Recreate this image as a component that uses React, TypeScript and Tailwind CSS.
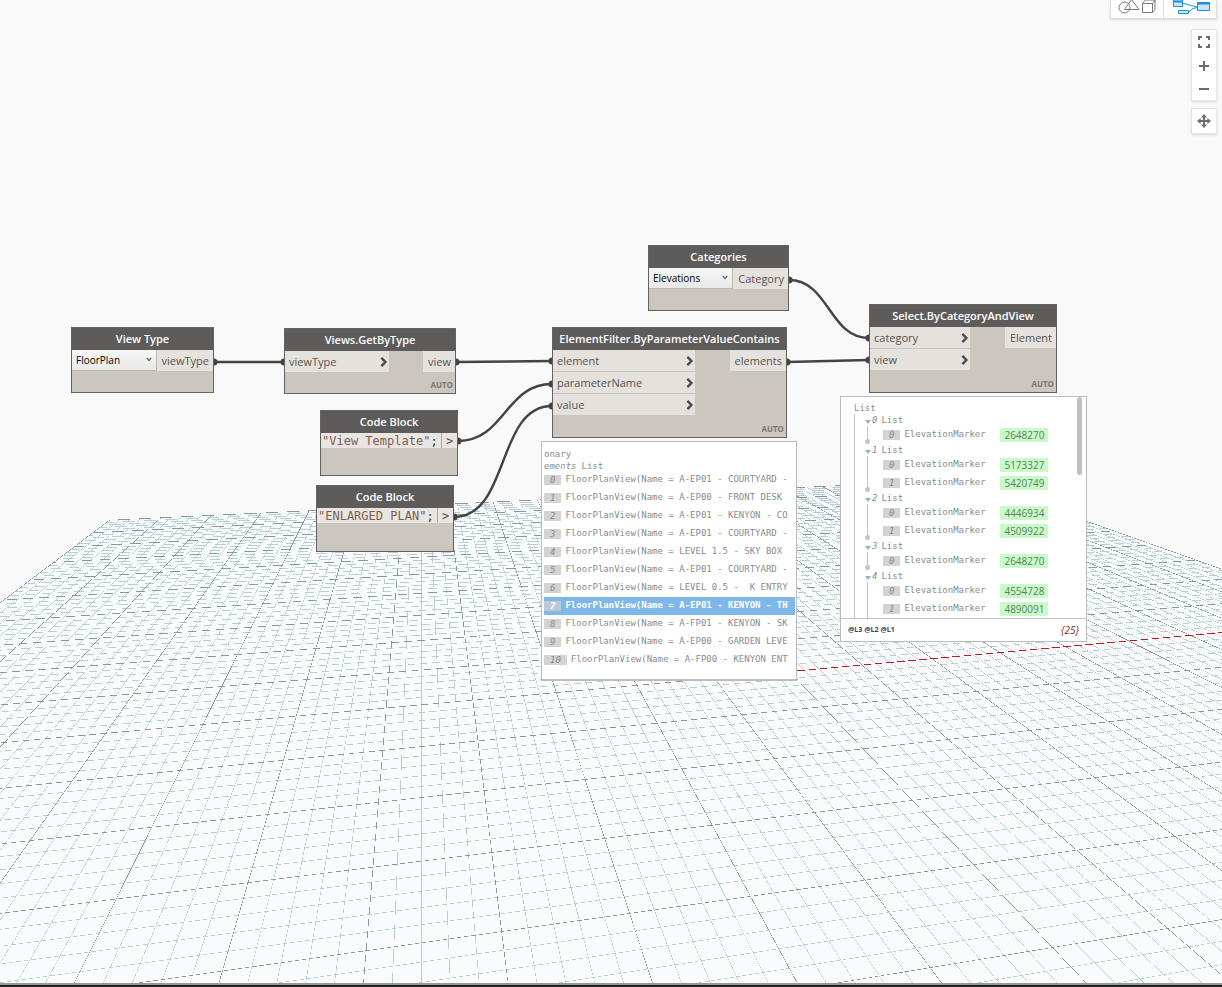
import React from "react";
import clsx from "clsx";

type Watch = { id: number; text: string; selected?: boolean };

const filterRows: Watch[] = [
  { id: 0, text: "FloorPlanView(Name = A-EP01 - COURTYARD - " },
  { id: 1, text: "FloorPlanView(Name = A-EP00 - FRONT DESK " },
  { id: 2, text: "FloorPlanView(Name = A-EP01 - KENYON - CO" },
  { id: 3, text: "FloorPlanView(Name = A-EP01 - COURTYARD - " },
  { id: 4, text: "FloorPlanView(Name = LEVEL 1.5 - SKY BOX " },
  { id: 5, text: "FloorPlanView(Name = A-EP01 - COURTYARD - " },
  { id: 6, text: "FloorPlanView(Name = LEVEL 0.5 -  K ENTRY" },
  { id: 7, text: "FloorPlanView(Name = A-EP01 - KENYON - TH", selected: true },
  { id: 8, text: "FloorPlanView(Name = A-FP01 - KENYON - SK" },
  { id: 9, text: "FloorPlanView(Name = A-EP00 - GARDEN LEVE" },
  { id: 10, text: "FloorPlanView(Name = A-FP00 - KENYON ENT" },
];

const markerLists = [
  ["2648270"],
  ["5173327", "5420749"],
  ["4446934", "4509922"],
  ["2648270"],
  ["4554728", "4890091"],
];

// Perspective of the ground plane: u counts lines left to right, v counts them
// towards the horizon. Every fifth line is a major one.
const HORIZON = 285;
const CENTER_X = 421.3;

function project(u: number, v: number) {
  const h = 1 / (0.00152 + 0.0000431 * v + 0.00000891 * u);
  return { x: CENTER_X + u * 0.04142 * h, y: HORIZON + h };
}

// A thin filled strip, narrower than a pixel, so that it breaks into dashes
// where it crosses the pixel rows.
function strip(u1: number, v1: number, u2: number, v2: number, width = 0.58) {
  const a = project(u1, v1);
  const b = project(u2, v2);
  const length = Math.hypot(b.x - a.x, b.y - a.y);
  const nx = ((b.y - a.y) / length) * (width / 2);
  const ny = ((a.x - b.x) / length) * (width / 2);
  const points = [
    [a.x + nx, a.y + ny],
    [b.x + nx, b.y + ny],
    [b.x - nx, b.y - ny],
    [a.x - nx, a.y - ny],
  ];
  return `M${points.map(([x, y]) => `${x.toFixed(3)} ${y.toFixed(3)}`).join("L")}Z`;
}

function buildGrid() {
  const minor: string[] = [];
  const major: string[] = [];
  for (let u = -32; u <= 68; u++) {
    ((u + 32) % 5 === 0 ? major : minor).push(strip(u, -10, u, 70));
  }
  for (let v = -10; v <= 70; v++) {
    if (v === 20) continue;
    ((v + 10) % 5 === 0 ? major : minor).push(strip(-32, v, 68, v));
  }
  major.push(strip(-32, 20, 18, 20));
  return { minor, major, axis: strip(18, 20, 68, 20, 0.68) };
}

const grid = buildGrid();

function Ground() {
  return (
    <svg
      className="absolute inset-0 h-full w-full"
      viewBox="0 0 1222 983"
      preserveAspectRatio="xMinYMin slice"
      shapeRendering="crispEdges"
      aria-hidden="true"
    >
      <path d="M0 603L110 521L969 480L1222 570V983H0Z" fill="#f9fbfc" />
      <g fill="#b7cdd8">
        {grid.minor.map((d) => (
          <path key={d} d={d} />
        ))}
      </g>
      <g fill="#8b979f">
        {grid.major.map((d) => (
          <path key={d} d={d} />
        ))}
      </g>
      <path d={grid.axis} fill="#c01823" />
    </svg>
  );
}

const wires = [
  "M214 362H284",
  "M456 362L552 361",
  "M458 441C505 441 505 384 552 384",
  "M454 517C510 517 496 406 552 406",
  "M787 362L869 360",
  "M789 280C829 280 829 338 869 338",
];

const wireEnds = [
  [214, 362], [284, 362], [456, 362], [552, 361], [458, 441], [552, 384],
  [454, 517], [552, 406], [787, 362], [869, 360], [789, 280], [869, 338],
];

function Wires() {
  return (
    <svg className="absolute inset-0 h-full w-full" fill="none" aria-hidden="true">
      {wires.map((d) => (
        <path key={d} d={d} stroke="#434343" strokeWidth="2.4" />
      ))}
      {wireEnds.map(([x, y]) => (
        <circle key={`${x}-${y}`} cx={x} cy={y} r="3.5" fill="#434343" />
      ))}
    </svg>
  );
}

function Node({
  title,
  className,
  auto,
  children,
}: {
  title: string;
  className: string;
  auto?: boolean;
  children: React.ReactNode;
}) {
  return (
    <section
      className={clsx(
        "absolute flex flex-col border border-[#63625f] bg-[#cbc6be]",
        className
      )}
    >
      <h2 className="h-[22px] shrink-0 bg-[#5e5c5a] text-center text-[11px] leading-[22px] font-semibold whitespace-nowrap text-white">
        {title}
      </h2>
      <div className="flex items-start justify-between">{children}</div>
      {auto && (
        <span className="mt-auto pr-[2px] pb-[3px] text-right text-[8px] leading-[10px] font-bold text-[#7b7773]">
          AUTO
        </span>
      )}
    </section>
  );
}

function InPort({ name }: { name: string }) {
  return (
    <li className="flex h-[22px] items-center justify-between border-b border-[#cbc6be] bg-[#e5e2dd] pt-px pr-px pl-1">
      {name}
      <svg width="8" height="12" viewBox="0 0 8 12" fill="none" stroke="#4b4b4b" strokeWidth="2.4">
        <path d="M1.4 1.8L5.4 6L1.4 10.2" />
      </svg>
    </li>
  );
}

function InPorts({ names, className }: { names: string[]; className: string }) {
  return (
    <ul className={clsx("text-[11px] text-[#55534f]", className)}>
      {names.map((name) => (
        <InPort key={name} name={name} />
      ))}
    </ul>
  );
}

function OutPort({ name }: { name: string }) {
  return (
    <span className="flex h-[21px] items-center bg-[#e5e2dd] pt-px pr-1 pl-[5px] text-[11px] text-[#55534f]">
      {name}
    </span>
  );
}

function Dropdown({ label, value }: { label: string; value: string }) {
  return (
    <div className="relative flex flex-1 border-r border-b border-[#bdbab5]">
      <select
        aria-label={label}
        defaultValue={value}
        className="h-[20px] w-full appearance-none bg-linear-to-b from-[#f6f6f6] to-[#e9e9e9] pl-1 text-[10px] text-black"
      >
        <option>{value}</option>
      </select>
      <svg
        className="pointer-events-none absolute top-[7px] right-1"
        width="6" height="5" viewBox="0 0 6 5" fill="none" stroke="#5a5a5a" strokeWidth="1.2"
      >
        <path d="M0.8 0.8L3 3.6L5.2 0.8" />
      </svg>
    </div>
  );
}

function CodeLine({ code }: { code: string }) {
  return (
    <div className="flex h-[15px] w-full items-center bg-[#e8e5e2] font-['DejaVu_Sans_Mono',monospace] text-[12px]">
      <code className="flex-1 pl-px font-['DejaVu_Sans_Mono',monospace] whitespace-pre text-[#7d5f4c]">
        {code}
        <span className="text-[#333]">;</span>
      </code>
      <span className="flex h-full w-4 items-center justify-center border-l border-[#aaa7a2] text-[#55534f]">
        &gt;
      </span>
    </div>
  );
}

function IndexTag({ id, selected }: { id: number; selected?: boolean }) {
  return (
    <span
      className={clsx(
        "h-[10px] shrink-0 px-[6px] text-[9px] leading-[10px] italic",
        selected ? "bg-[#bcc9d6] text-white" : "bg-[#d3d3d3] text-[#8a8a8a]"
      )}
    >
      {id}
    </span>
  );
}

function FilterPreview() {
  return (
    <div className="absolute top-[441px] left-[541px] h-[240px] w-[256px] overflow-hidden border border-b-2 border-[#bcbcbc] bg-white pt-[6px] pr-px pl-[2px] font-['DejaVu_Sans_Mono',monospace] text-[9px] text-[#8b8b8b]">
      <p className="h-[12px] leading-[12px]">onary</p>
      <p className="flex h-[11px] gap-[5px] leading-[12px]">
        <span className="italic">ements</span>
        <span>List</span>
      </p>
      <ul>
        {filterRows.map((row) => (
          <li
            key={row.id}
            className={clsx(
              "flex h-[18px] items-center gap-1 overflow-hidden whitespace-pre",
              row.selected && "bg-[#7fb7e9] font-bold text-white"
            )}
          >
            <IndexTag id={row.id} selected={row.selected} />
            {row.text}
          </li>
        ))}
      </ul>
    </div>
  );
}

function SelectPreview() {
  return (
    <div className="absolute top-[396px] left-[840px] flex h-[246px] w-[247px] flex-col border border-[#bcbcbc] bg-white font-['DejaVu_Sans_Mono',monospace] text-[9px] text-[#8b8b8b]">
      <div className="flex min-h-0 flex-1 justify-between">
        <div className="overflow-hidden pt-[5px] pl-[13px]">
          <p className="h-[12px] leading-[12px]">List</p>
          <ul className="border-l border-[#c4c4c4] pl-[12px]">
            {markerLists.map((markers, i) => (
              <li key={i}>
                <p className="-ml-[2px] flex h-[12px] items-center leading-[12px]">
                  <svg className="mt-1" width="6" height="4" viewBox="0 0 6 4">
                    <path d="M0 0H6L3 4Z" fill="#8db4cf" />
                  </svg>
                  <span className="pr-1 pl-px italic">{i}</span>
                  List
                </p>
                <ul className="relative border-l border-[#c4c4c4] pl-[15px]">
                  {markers.map((id, n) => (
                    <li key={id} className="flex h-[18px] items-center">
                      <IndexTag id={n} />
                      <span className="w-[100px] pl-1">ElevationMarker</span>
                      <span className="h-[14px] bg-[#c8fbc8] px-1 font-['Open_Sans',sans-serif] text-[10px] leading-[14px] text-[#5f7d5f]">
                        {id}
                      </span>
                    </li>
                  ))}
                  {i < 4 && (
                    <span className="absolute bottom-0 -left-[3px] h-[5px] w-[5px] rounded-full bg-[#c4c4c4]" />
                  )}
                </ul>
              </li>
            ))}
          </ul>
        </div>
        <div className="mr-1 h-[78px] w-[5px] rounded-full bg-[#c1c1c1]" />
      </div>
      <div className="flex h-[23px] items-center justify-between border-t border-[#c4c4c4] px-[7px] font-['Open_Sans',sans-serif]">
        <span className="flex gap-[2px] text-[7px] font-bold text-[#444]">
          <span>@L3</span>
          <span>@L2</span>
          <span>@L1</span>
        </span>
        <span className="text-[10px] text-[#7b1f28] italic">{"{25}"}</span>
      </div>
    </div>
  );
}

function ViewControls() {
  return (
    <div className="absolute top-0 right-[5px] flex flex-col items-end">
      <div className="flex h-[19px] border border-t-0 border-[#dedede] bg-white shadow-sm">
        <button aria-label="3D preview" className="w-[53px] border-r border-[#dedede]">
          <svg width="52" height="18" viewBox="0 0 52 18" fill="none" stroke="#7a7a7a">
            <circle cx="13.5" cy="7.5" r="5.5" />
            <path d="M13.5 9.5L20.5 -0.5L28 9.5Z" />
            <path d="M31.5 3.5H41.5V12.5H31.5ZM31.5 3.5L34.5 0H44L41.5 3.5M44 0V9.5L41.5 12.5" />
          </svg>
        </button>
        <button aria-label="Graph view" className="w-[52px]">
          <svg width="52" height="18" viewBox="0 0 52 18" fill="#c9e4f8" stroke="#1f8fdc">
            <path d="M18 3L33 7M25 12L29 8.5L33 7.5" fill="none" />
            <path d="M9.5 -2V6.5H18.5V-2Z" />
            <path d="M9 1.5H19" strokeWidth="2" />
            <path d="M33.5 2.5H45.5V10.5H33.5ZM14.5 10.5H24.5V13.5H14.5Z" />
            <path d="M33 3.5H46" strokeWidth="2" />
          </svg>
        </button>
      </div>
      <div className="mt-[10px] flex w-[26px] flex-col border border-[#e4e4e4] bg-white shadow-sm">
        <button aria-label="Fit to screen" className="flex h-6 items-center justify-center">
          <svg width="12" height="12" viewBox="0 0 12 12" fill="none" stroke="#6c6c6c" strokeWidth="2">
            <path d="M1 4V1H4M8 1H11V4M11 8V11H8M4 11H1V8" />
          </svg>
        </button>
        <button aria-label="Zoom in" className="flex h-6 items-center justify-center">
          <svg width="10" height="10" viewBox="0 0 10 10" stroke="#6c6c6c" strokeWidth="2">
            <path d="M0 5H10M5 0V10" />
          </svg>
        </button>
        <button aria-label="Zoom out" className="flex h-[22px] items-center justify-center">
          <svg width="10" height="10" viewBox="0 0 10 10" stroke="#6c6c6c" strokeWidth="2">
            <path d="M0 5H10" />
          </svg>
        </button>
      </div>
      <button
        aria-label="Pan"
        className="mt-[7px] flex h-[26px] w-[26px] items-center justify-center border border-[#e4e4e4] bg-white shadow-sm"
      >
        <svg width="14" height="14" viewBox="0 0 14 14">
          <path d="M1 7H13M7 1V13" stroke="#6c6c6c" strokeWidth="2" />
          <path d="M7 0L10 3.6H4ZM7 14L4 10.4H10ZM0 7L3.6 4V10ZM14 7L10.4 10V4Z" fill="#6c6c6c" />
        </svg>
      </button>
    </div>
  );
}

export default function App() {
  return (
    <main className="flex min-h-screen flex-col bg-[#f9f9f9] font-['Open_Sans',sans-serif]">
      <div className="relative flex-1 overflow-hidden">
        <Ground />
        <Wires />

        <Node title="View Type" className="top-[327px] left-[71px] h-[66px] w-[143px]">
          <Dropdown label="View type" value="FloorPlan" />
          <OutPort name="viewType" />
        </Node>

        <Node title="Views.GetByType" auto className="top-[328px] left-[284px] h-[66px] w-[172px]">
          <InPorts names={["viewType"]} className="w-[104px]" />
          <OutPort name="view" />
        </Node>

        <Node title="Code Block" className="top-[410px] left-[320px] h-[66px] w-[138px]">
          <CodeLine code={'"View Template"'} />
        </Node>

        <Node title="Code Block" className="top-[485px] left-[316px] h-[67px] w-[138px]">
          <CodeLine code={'"ENLARGED PLAN"'} />
        </Node>

        <Node
          title="ElementFilter.ByParameterValueContains"
          auto
          className="top-[327px] left-[552px] h-[111px] w-[235px]"
        >
          <InPorts names={["element", "parameterName", "value"]} className="w-[142px]" />
          <OutPort name="elements" />
        </Node>

        <Node title="Categories" className="top-[245px] left-[648px] h-[66px] w-[141px]">
          <Dropdown label="Category" value="Elevations" />
          <OutPort name="Category" />
        </Node>

        <Node
          title="Select.ByCategoryAndView"
          auto
          className="top-[304px] left-[869px] h-[89px] w-[188px]"
        >
          <InPorts names={["category", "view"]} className="w-[100px]" />
          <OutPort name="Element" />
        </Node>

        <FilterPreview />
        <SelectPreview />
        <ViewControls />
      </div>
      <div className="h-1 border-t-2 border-[#979797] bg-[#222]" />
    </main>
  );
}
